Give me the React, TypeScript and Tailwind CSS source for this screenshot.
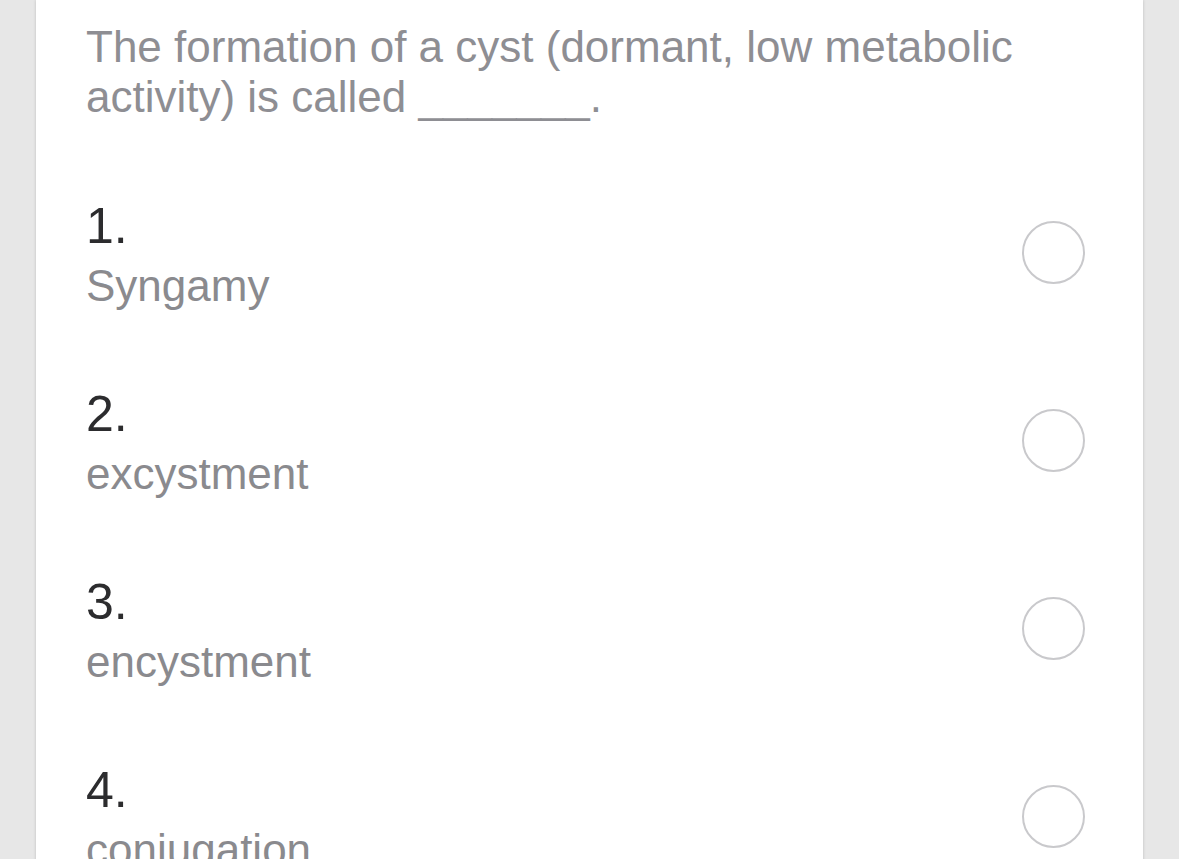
import React from 'react';

const options = ['Syngamy', 'excystment', 'encystment', 'conjugation'];

export default function App() {
  return (
    <div className="h-[859px] w-full overflow-hidden bg-[#e7e7e7] font-['Liberation_Sans',Arial,sans-serif]">
      <div className="mx-[36px] min-h-full bg-white pl-[50px] pr-[58px] pt-[22px] shadow-[0_0_3px_rgba(0,0,0,0.18)]">
        <p className="text-[44px] leading-[50px] text-[#8e8e93]">
          The formation of a cyst (dormant, low metabolic activity) is called _______.
        </p>

        <div className="mt-[75px] flex flex-col gap-[68px]">
          {options.map((opt, i) => (
            <div key={opt} className="flex items-start justify-between">
              <div className="flex flex-col">
                <div className="text-[50px] leading-[58px] text-[#2c2c2e]">{i + 1}.</div>
                <div className="text-[44px] leading-[62px] text-[#8a8a8e]">{opt}</div>
              </div>
              <div className="mt-[24px] h-[63px] w-[63px] rounded-full border-2 border-[#c9c9cc]" />
            </div>
          ))}
        </div>
      </div>
    </div>
  );
}
